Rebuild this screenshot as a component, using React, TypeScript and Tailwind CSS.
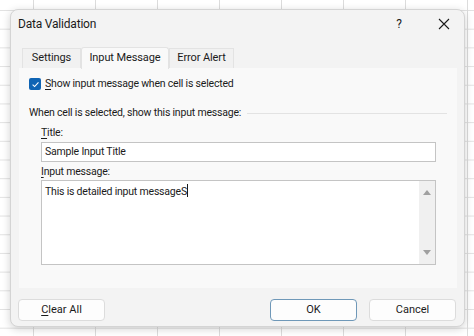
import React from "react";

const font = { fontFamily: 'Roboto, "Noto Sans", sans-serif' };

const Tab = ({ label, active, w }: { label: string; active?: boolean; w: string }) => (
  <div
    className={
      (active
        ? "h-[22px] bg-[#f9f9f9] border border-b-0 border-[#e3e3e3] rounded-t-[3px] relative z-10 -mb-px"
        : "h-[20px] mt-[2px] bg-[#f1f1f1] border border-b-0 border-[#e3e3e3]") +
      " flex items-center justify-center " +
      w
    }
  >
    <span className="text-[11px] text-[#1b1b1b] tracking-[-0.1px]">{label}</span>
  </div>
);

const Button = ({ children, primary }: { children: React.ReactNode; primary?: boolean }) => (
  <button
    className={
      "h-[22px] w-[87px] rounded-[4px] bg-[#fdfdfd] text-[11px] text-[#1b1b1b] flex items-center justify-center " +
      (primary ? "border border-[#6f98b8]" : "border border-[#dcdcdc]")
    }
  >
    {children}
  </button>
);

export default function App() {
  return (
    <div
      className="w-[474px] h-[336px] relative overflow-hidden bg-white bg-[linear-gradient(to_right,#dcdcdc_1px,transparent_1px),linear-gradient(to_bottom,#e2e2e2_1px,transparent_1px)] bg-[size:62px_18.7px] bg-[position:33px_10px]"
      style={font}
    >
      <div className="absolute left-[10px] top-[9px] w-[455px] h-[318px] rounded-[8px] bg-[#f3f3f3] border border-[#d4d4d4] shadow-[0_2px_8px_rgba(0,0,0,0.18)] flex flex-col">
        {/* title bar */}
        <div className="h-[28px] flex items-center pl-[7px] pr-[14px]">
          <span className="text-[12px] text-[#1b1b1b] tracking-[-0.2px]">Data Validation</span>
          <span className="ml-auto text-[12px] text-[#1b1b1b] mr-[36px]">?</span>
          <svg width="12" height="12" viewBox="0 0 12 12">
            <path d="M1 1L11 11M11 1L1 11" stroke="#1b1b1b" strokeWidth="1.1" />
          </svg>
        </div>

        {/* tabs */}
        <div className="mt-[8px] pl-[11px] flex items-end">
          <Tab label="Settings" w="w-[59px]" />
          <Tab label="Input Message" active w="w-[88px]" />
          <Tab label="Error Alert" w="w-[65px]" />
        </div>

        {/* panel */}
        <div className="ml-[8px] w-[438px] h-[220px] bg-[#f9f9f9] flex flex-col px-[10px] pt-[10px] text-[10.5px] tracking-[-0.2px] text-[#1b1b1b]">
          <div className="flex items-center h-[12px]">
            <div className="w-[12px] h-[12px] rounded-[2px] bg-[#0f64b4] flex items-center justify-center">
              <svg width="9" height="9" viewBox="0 0 10 10">
                <path d="M1.8 5.2L4 7.3L8.3 2.6" stroke="#fff" strokeWidth="1.2" fill="none" />
              </svg>
            </div>
            <span className="ml-[4px]">
              <u className="underline-offset-2">S</u>how input message when cell is selected
            </span>
          </div>

          <div className="mt-[15px] flex items-center h-[16px]">
            <span className="whitespace-nowrap">When cell is selected, show this input message:</span>
            <div className="ml-[6px] flex-1 h-px bg-[#e3e3e3]" />
          </div>

          <div className="pl-[12px] pr-[11px] flex flex-col">
            <div className="mt-[4px] h-[16px] flex items-center">
              <span>
                <u className="underline-offset-2">T</u>itle:
              </span>
            </div>
            <div className="mt-[1px] h-[20px] border border-[#c4c4c4] bg-white flex items-center px-[3px]">
              <span>Sample Input Title</span>
            </div>
            <div className="mt-[2px] h-[16px] flex items-center">
              <span>
                <u className="underline-offset-2">I</u>nput message:
              </span>
            </div>
            <div className="h-[85px] border border-[#c4c4c4] bg-white flex">
              <div className="flex-1 px-[3px] pt-[3px] flex items-start">
                <span>This is detailed input messageS</span>
                <span className="w-px h-[13px] bg-[#1b1b1b]" />
              </div>
              <div className="w-[16px] bg-[#f0f0f0] flex flex-col items-center justify-between py-[8px]">
                <svg width="8" height="6" viewBox="0 0 8 6">
                  <path d="M0 6L4 1L8 6Z" fill="#a0a0a0" />
                </svg>
                <svg width="8" height="6" viewBox="0 0 8 6">
                  <path d="M0 0L4 5L8 0Z" fill="#a0a0a0" />
                </svg>
              </div>
            </div>
          </div>
        </div>

        {/* buttons */}
        <div className="mt-[11px] flex items-center pl-[7px] pr-[8px]">
          <Button>
            <span>
              <u className="underline-offset-2">C</u>lear All
            </span>
          </Button>
          <div className="ml-auto">
            <Button primary>OK</Button>
          </div>
          <div className="ml-[12px]">
            <Button>Cancel</Button>
          </div>
        </div>
      </div>
    </div>
  );
}
